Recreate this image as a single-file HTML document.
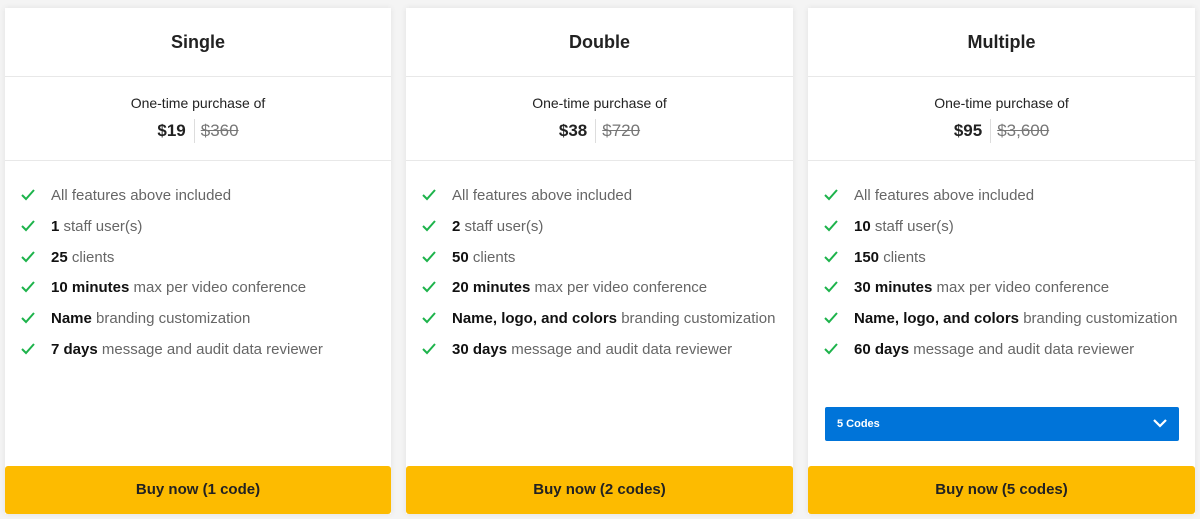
<!DOCTYPE html>
<html><head><style>
body{margin:0;width:1200px;height:519px;background:#f4f4f4;font-family:"Liberation Sans",sans-serif;position:relative;overflow:hidden}
.card{position:absolute;top:8px;height:506px;background:#fff;box-shadow:0 0 6px rgba(0,0,0,.08)}
.h{height:68px;border-bottom:1px solid #e8e8e8;text-align:center;line-height:68px;font-size:18px;font-weight:bold;color:#222}
.p{height:83px;border-bottom:1px solid #e8e8e8;text-align:center;color:#222}
.p .o{font-size:14px;padding-top:18px;height:18px}
.p .pr{margin-top:6px;font-size:17px}
.p b{padding-right:8px;border-right:1px solid #ddd;display:inline-block;line-height:24px}
.p s{color:#777;padding-left:6px;font-size:17px}
ul{list-style:none;margin:0;padding:24px 0 0 16px}
li{height:30.8px;font-size:15px;color:#666;position:relative;padding-left:30px;line-height:22px}
li b{color:#111}
li svg{position:absolute;left:0;top:4px}
.btn{position:absolute;left:0;right:0;bottom:0;height:48px;background:#fdbb00;border-radius:3px;text-align:center;line-height:48px;font-weight:bold;font-size:15px;color:#222}
.dd{position:absolute;left:17px;right:16px;top:399px;height:34px;background:#0074d9;border-radius:2px;color:#fff;font-size:11px;font-weight:bold;line-height:34px;padding-left:12px}
.dd svg{position:absolute;right:12px;top:12px}
</style></head><body>
<div class="card" style="left:5px;width:386px">
<div class="h">Single</div>
<div class="p"><div class="o">One-time purchase of</div><div class="pr"><b>$19</b><s>$360</s></div></div>
<ul>
<li><svg width="14" height="12"><path d="M1 6l4 4 8-9" stroke="#1db34b" stroke-width="2" fill="none"/></svg>All features above included</li>
<li><svg width="14" height="12"><path d="M1 6l4 4 8-9" stroke="#1db34b" stroke-width="2" fill="none"/></svg><b>1</b> staff user(s)</li>
<li><svg width="14" height="12"><path d="M1 6l4 4 8-9" stroke="#1db34b" stroke-width="2" fill="none"/></svg><b>25</b> clients</li>
<li><svg width="14" height="12"><path d="M1 6l4 4 8-9" stroke="#1db34b" stroke-width="2" fill="none"/></svg><b>10 minutes</b> max per video conference</li>
<li><svg width="14" height="12"><path d="M1 6l4 4 8-9" stroke="#1db34b" stroke-width="2" fill="none"/></svg><b>Name</b> branding customization</li>
<li><svg width="14" height="12"><path d="M1 6l4 4 8-9" stroke="#1db34b" stroke-width="2" fill="none"/></svg><b>7 days</b> message and audit data reviewer</li>
</ul>
<div class="btn">Buy now (1 code)</div>
</div>
<div class="card" style="left:406px;width:387px">
<div class="h">Double</div>
<div class="p"><div class="o">One-time purchase of</div><div class="pr"><b>$38</b><s>$720</s></div></div>
<ul>
<li><svg width="14" height="12"><path d="M1 6l4 4 8-9" stroke="#1db34b" stroke-width="2" fill="none"/></svg>All features above included</li>
<li><svg width="14" height="12"><path d="M1 6l4 4 8-9" stroke="#1db34b" stroke-width="2" fill="none"/></svg><b>2</b> staff user(s)</li>
<li><svg width="14" height="12"><path d="M1 6l4 4 8-9" stroke="#1db34b" stroke-width="2" fill="none"/></svg><b>50</b> clients</li>
<li><svg width="14" height="12"><path d="M1 6l4 4 8-9" stroke="#1db34b" stroke-width="2" fill="none"/></svg><b>20 minutes</b> max per video conference</li>
<li><svg width="14" height="12"><path d="M1 6l4 4 8-9" stroke="#1db34b" stroke-width="2" fill="none"/></svg><b>Name, logo, and colors</b> branding customization</li>
<li><svg width="14" height="12"><path d="M1 6l4 4 8-9" stroke="#1db34b" stroke-width="2" fill="none"/></svg><b>30 days</b> message and audit data reviewer</li>
</ul>
<div class="btn">Buy now (2 codes)</div>
</div>
<div class="card" style="left:808px;width:387px">
<div class="h">Multiple</div>
<div class="p"><div class="o">One-time purchase of</div><div class="pr"><b>$95</b><s>$3,600</s></div></div>
<ul>
<li><svg width="14" height="12"><path d="M1 6l4 4 8-9" stroke="#1db34b" stroke-width="2" fill="none"/></svg>All features above included</li>
<li><svg width="14" height="12"><path d="M1 6l4 4 8-9" stroke="#1db34b" stroke-width="2" fill="none"/></svg><b>10</b> staff user(s)</li>
<li><svg width="14" height="12"><path d="M1 6l4 4 8-9" stroke="#1db34b" stroke-width="2" fill="none"/></svg><b>150</b> clients</li>
<li><svg width="14" height="12"><path d="M1 6l4 4 8-9" stroke="#1db34b" stroke-width="2" fill="none"/></svg><b>30 minutes</b> max per video conference</li>
<li><svg width="14" height="12"><path d="M1 6l4 4 8-9" stroke="#1db34b" stroke-width="2" fill="none"/></svg><b>Name, logo, and colors</b> branding customization</li>
<li><svg width="14" height="12"><path d="M1 6l4 4 8-9" stroke="#1db34b" stroke-width="2" fill="none"/></svg><b>60 days</b> message and audit data reviewer</li>
</ul>
<div class="dd">5 Codes<svg width="14" height="9"><path d="M1 1l6 6 6-6" stroke="#fff" stroke-width="2.2" fill="none"/></svg></div>
<div class="btn">Buy now (5 codes)</div>
</div>
</body></html>
